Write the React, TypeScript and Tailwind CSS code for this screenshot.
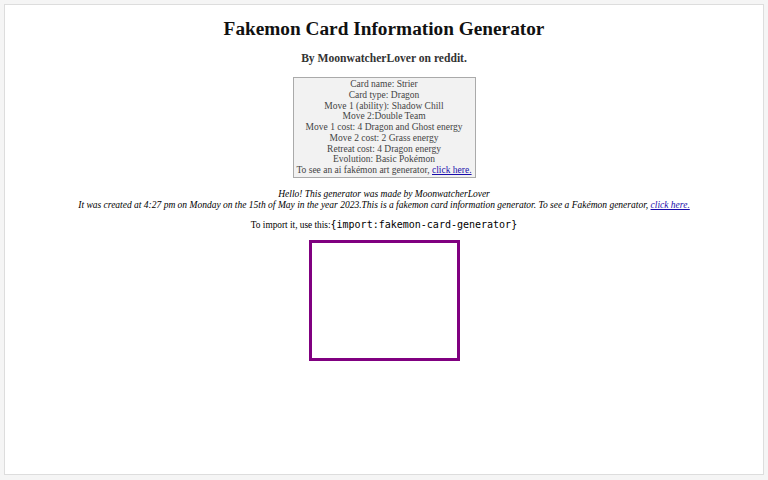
const lines = [
  'Card name: Strier',
  'Card type: Dragon',
  'Move 1 (ability): Shadow Chill',
  'Move 2:Double Team',
  'Move 1 cost: 4 Dragon and Ghost energy',
  'Move 2 cost: 2 Grass energy',
  'Retreat cost: 4 Dragon energy',
  'Evolution: Basic Pokémon',
];

export default function App() {
  return (
    <div className="min-h-[480px] bg-[#f5f5f5] p-1 font-['Liberation_Serif',serif]">
      <div className="flex h-[471px] flex-col items-center border border-[#ddd] bg-white">
        <h1 className="mt-[11px] text-[19.3px] leading-[26px] font-bold text-[#111]">
          Fakemon Card Information Generator
        </h1>
        <h2 className="mt-[9px] text-[11.6px] leading-[16px] font-bold text-[#333]">
          By MoonwatcherLover on reddit.
        </h2>
        <div className="mt-[10px] w-[183px] border border-[#aaa] bg-[#f2f2f2] py-[1px] text-center text-[9.5px] leading-[10.75px] text-[#444]">
          {lines.map((l) => (
            <div key={l}>{l}</div>
          ))}
          <div>
            To see an ai fakémon art generator,{' '}
            <a href="#" className="text-[#1a0dab] underline">
              click here.
            </a>
          </div>
        </div>
        <div className="mt-[11px] text-center text-[9.5px] leading-[11px] text-black italic">
          <div>Hello! This generator was made by MoonwatcherLover</div>
          <div>
            It was created at 4:27 pm on Monday on the 15th of May in the year 2023.This is a fakemon card
            information generator. To see a Fakémon generator,{' '}
            <a href="#" className="text-[#1a0dab] underline">
              click here.
            </a>
          </div>
        </div>
        <div className="mt-[8px] text-[9.3px] leading-[12px] text-black">
          To import it, use this:
          <code className="font-['DejaVu_Sans_Mono',monospace] text-[10px]">{'{import:fakemon-card-generator}'}</code>
        </div>
        <div className="mt-[9px] h-[121px] w-[151px] border-[3px] border-[#800080]" />
      </div>
    </div>
  );
}
